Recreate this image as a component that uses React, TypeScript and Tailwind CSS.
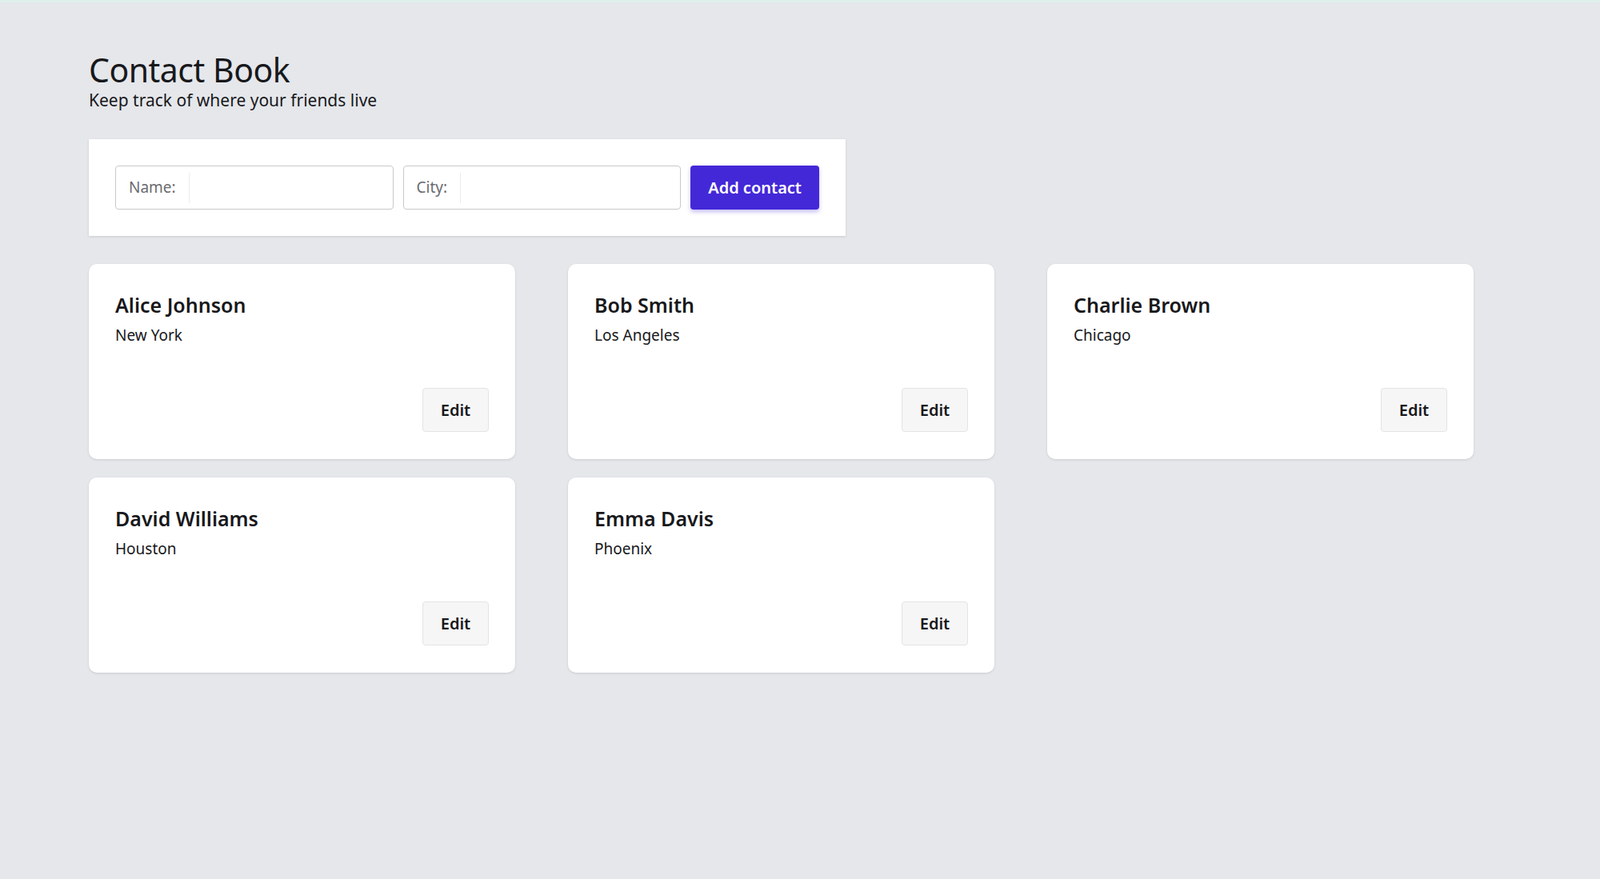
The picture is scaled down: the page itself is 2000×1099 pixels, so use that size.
const contacts = [
  { name: 'Alice Johnson', city: 'New York' },
  { name: 'Bob Smith', city: 'Los Angeles' },
  { name: 'Charlie Brown', city: 'Chicago' },
  { name: 'David Williams', city: 'Houston' },
  { name: 'Emma Davis', city: 'Phoenix' },
]

function Field({ label }: { label: string }) {
  return (
    <div className="flex items-center w-[348px] h-[55px] bg-white border border-[#c9c9cc] rounded-[4px]">
      <span className="px-4 text-[19px] text-[#6b6b70]">{label}</span>
      <span className="w-px h-[38px] bg-[#ececee]" />
      <input className="flex-1 h-full outline-none px-3 bg-transparent" />
    </div>
  )
}

export default function App() {
  return (
    <div className="min-h-[1099px] bg-[#e5e7eb] border-t-[3px] border-[#dff0ea] text-[#18181b] font-['Inter',sans-serif]">
      <div className="pl-[111px] pt-[59px]">
        <h1 className="text-[41px] leading-[50px] font-normal tracking-[-0.5px]">Contact Book</h1>
        <p className="text-[21px] leading-[28px] mt-[-1px]">Keep track of where your friends live</p>

        <div className="mt-[35px] w-[946px] h-[121px] bg-white shadow-[0_1px_3px_rgba(0,0,0,0.12)] flex items-center gap-3 px-[33px]">
          <Field label="Name:" />
          <Field label="City:" />
          <button className="w-[161px] h-[55px] rounded-[4px] bg-[#4328d8] text-white text-[20px] font-semibold shadow-[0_3px_5px_rgba(67,40,216,0.3)]">
            Add contact
          </button>
        </div>

        <div className="mt-[35px] grid grid-cols-[533px_533px_533px] gap-x-[66px] gap-y-[23px]">
          {contacts.map((c) => (
            <div key={c.name} className="h-[244px] bg-white rounded-[10px] shadow-[0_1px_3px_rgba(0,0,0,0.12)] px-[33px] pt-[33px] pb-[34px] flex flex-col">
              <h2 className="text-[25px] leading-[36px] font-semibold">{c.name}</h2>
              <p className="text-[19px] leading-[26px] mt-[7px]">{c.city}</p>
              <div className="mt-auto flex justify-end">
                <button className="w-[83px] h-[55px] rounded-[4px] bg-[#f6f6f6] border border-[#e4e4e6] text-[20px] font-semibold">
                  Edit
                </button>
              </div>
            </div>
          ))}
        </div>
      </div>
    </div>
  )
}
